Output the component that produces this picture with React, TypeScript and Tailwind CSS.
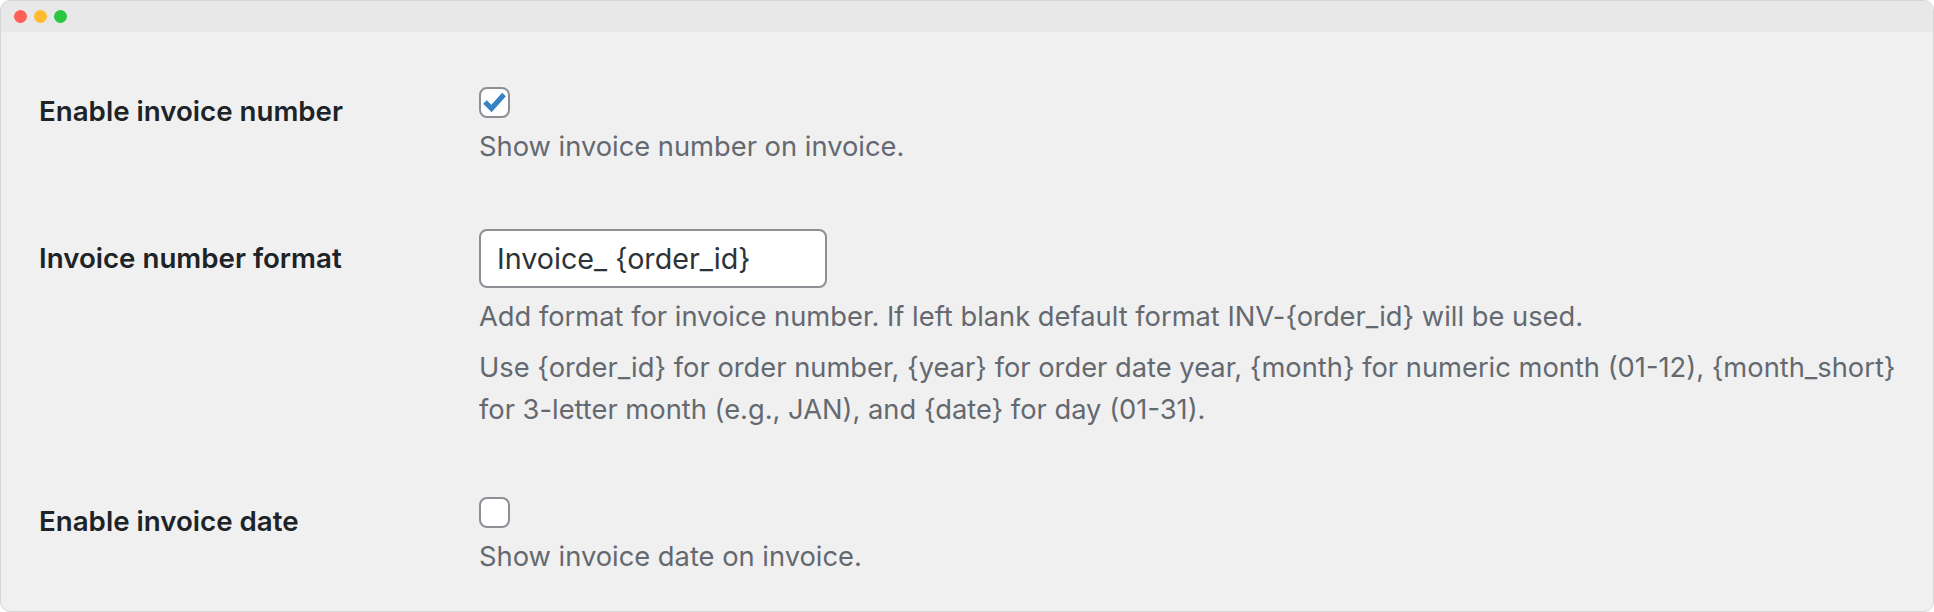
import React from "react";

function Check({ checked }: { checked: boolean }) {
  return (
    <div className="w-[31px] h-[31px] rounded-[8px] border-2 border-[#8c8f94] bg-white flex items-center justify-center">
      {checked && (
        <svg width="31" height="31" viewBox="0 0 31 31" className="block shrink-0">
          <polyline
            points="6,15 12.5,21.5 25,7.5"
            fill="none"
            stroke="#3582c4"
            strokeWidth="5"
            strokeLinejoin="miter"
          />
        </svg>
      )}
    </div>
  );
}

export default function App() {
  const label = "w-[440px] shrink-0 text-[27.7px] leading-[36px] font-semibold text-[#1d2327]";
  const desc = "text-[27.3px] leading-[42px] text-[#646970]";
  return (
    <div
      className="w-[1934px] h-[612px] bg-white"
      style={{ fontFamily: "Inter, 'Noto Sans', sans-serif" }}
    >
      <div className="w-full h-full rounded-[10px] border border-[#d6d6d6] bg-[#f0f0f0] overflow-hidden flex flex-col">
        <div className="h-[31px] bg-[#e8e8e8] flex items-center gap-[7px] pl-[13px] shrink-0">
          <span className="w-[13px] h-[13px] rounded-full bg-[#ff5f57]" />
          <span className="w-[13px] h-[13px] rounded-full bg-[#febc2e]" />
          <span className="w-[13px] h-[13px] rounded-full bg-[#28c840]" />
        </div>
        <div className="pl-[38px] flex flex-col">
          {/* Row 1 */}
          <div className="flex pt-[55px]">
            <div className={label + " mt-[6px]"}>Enable invoice number</div>
            <div className="flex flex-col">
              <Check checked />
              <p className={desc + " mt-[8px]"}>Show invoice number on invoice.</p>
            </div>
          </div>
          {/* Row 2 */}
          <div className="flex pt-[61px]">
            <div className={label + " mt-[11px]"}>Invoice number format</div>
            <div className="flex flex-col">
              <div className="w-[348px] h-[59px] rounded-[8px] border-2 border-[#8c8f94] bg-white flex items-center pl-[16px] text-[28.7px] leading-[36px] text-[#2c3338]">
                Invoice_ {"{order_id}"}
              </div>
              <p className={desc + " mt-[8px]"}>
                Add format for invoice number. If left blank default format INV-{"{order_id}"} will be used.
              </p>
              <p className={desc + " mt-[9px]"}>
                Use {"{order_id}"} for order number, {"{year}"} for order date year, {"{month}"} for numeric month (01-12), {"{month_short}"}
                <br />
                for 3-letter month (e.g., JAN), and {"{date}"} for day (01-31).
              </p>
            </div>
          </div>
          {/* Row 3 */}
          <div className="flex pt-[66px]">
            <div className={label + " mt-[6px]"}>Enable invoice date</div>
            <div className="flex flex-col">
              <Check checked={false} />
              <p className={desc + " mt-[8px]"}>Show invoice date on invoice.</p>
            </div>
          </div>
        </div>
      </div>
    </div>
  );
}
